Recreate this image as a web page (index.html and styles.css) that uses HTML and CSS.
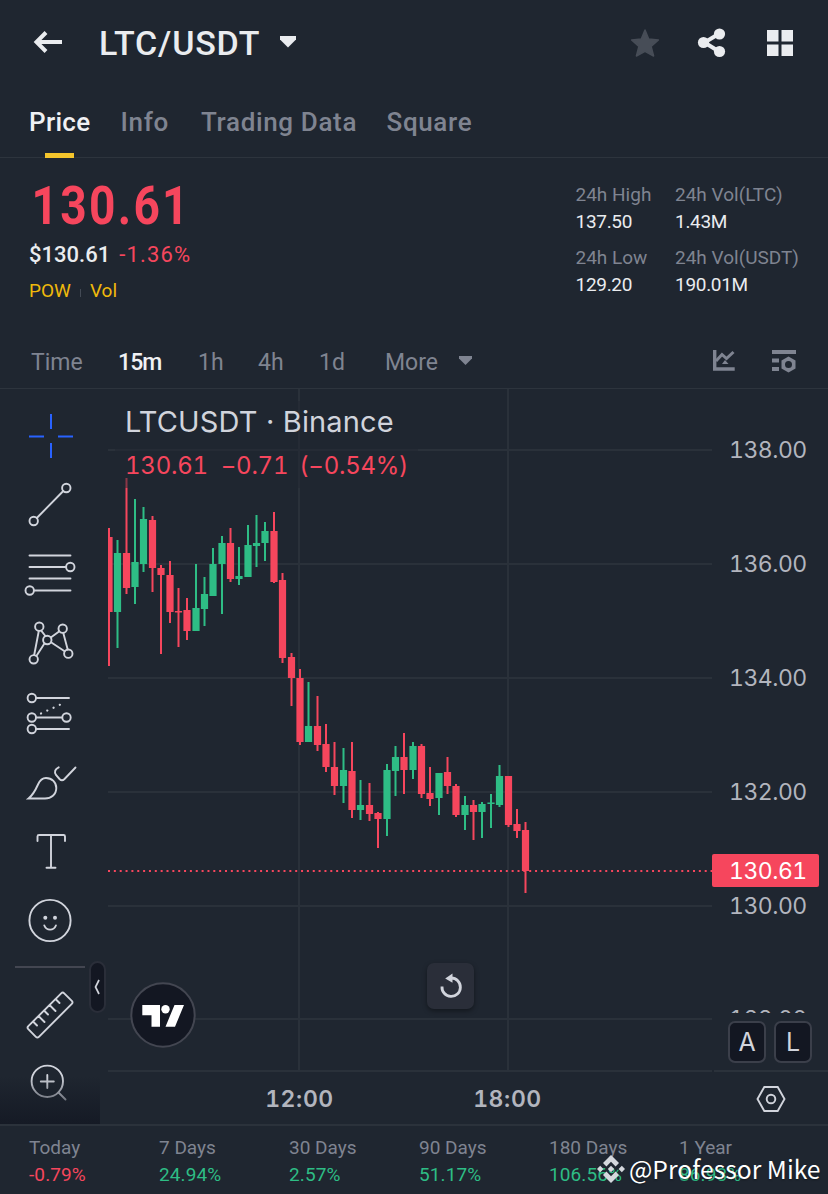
FILE: index.html
```html
<!DOCTYPE html>
<html lang="en">
<head>
<meta charset="utf-8">
<title>LTC/USDT</title>
<link rel="stylesheet" href="styles.css">
</head>
<body>
<div class="app">
  <header class="header">
    <svg class="back" width="30" height="26" viewBox="0 0 30 26"><path d="M29 13H4M13 3.500L3.500 13l9.500 9.500"/></svg>
    <h1 class="pair">LTC/USDT</h1>
    <svg class="caret" width="16" height="12" viewBox="0 0 16 12"><path d="M0 0H16V3.600L8 11.400 0 3.600Z"/></svg>
    <div class="header-actions">
      <svg width="30" height="30" viewBox="0 0 30 30"><path class="star" d="M15 2l3.700 9 9.700 1-7.300 6.400 2.500 9.600L15 23.300 6.400 28l2.500-9.600L1.600 12l9.700-1z"/></svg>
      <svg width="30" height="30" viewBox="0 0 30 30"><path class="share-line" d="M22 5.700L7.500 14.500 22 23.500"/><circle class="fill-light" cx="22.500" cy="6" r="5.600"/><circle class="fill-light" cx="6.500" cy="14.500" r="5.600"/><circle class="fill-light" cx="22.500" cy="23.500" r="5.600"/></svg>
      <svg width="26" height="26" viewBox="0 0 26 26"><path class="fill-light" d="M0 0h11.500v11.500H0zM14.500 0H26v11.500H14.500zM0 14.500h11.500V26H0zM14.500 14.500H26V26H14.500z"/></svg>
    </div>
  </header>

  <nav class="tabs">
    <span class="tab active">Price</span>
    <span class="tab">Info</span>
    <span class="tab">Trading Data</span>
    <span class="tab">Square</span>
  </nav>

  <section class="summary">
    <div class="quote">
      <div class="last">130.61</div>
      <div class="fiat"><span>$130.61</span><span class="change">-1.36%</span></div>
      <div class="tags"><span>POW</span><i></i><span>Vol</span></div>
    </div>
    <dl class="stats">
      <div><dt>24h High</dt><dd>137.50</dd></div>
      <div><dt>24h Vol(LTC)</dt><dd>1.43M</dd></div>
      <div><dt>24h Low</dt><dd>129.20</dd></div>
      <div><dt>24h Vol(USDT)</dt><dd>190.01M</dd></div>
    </dl>
  </section>

  <nav class="intervals">
    <span>Time</span><span class="active">15m</span><span>1h</span><span>4h</span><span>1d</span><span>More</span>
    <svg class="more-caret" width="13" height="9" viewBox="0 0 13 9"><path d="M0 0h13v2.500L6.500 9 0 2.500z"/></svg>
    <svg class="line-icon" width="22" height="22" viewBox="0 0 22 22"><path d="M1.700 0v19h20" stroke-width="3.400"/><path d="M3 11l6-6.500 4.500 4L20.500 2" stroke-width="3"/><path class="solid" d="M9 14l3-4 3.500 4z"/></svg>
    <svg class="list-icon" width="24" height="23" viewBox="0 0 24 23"><path class="solid" fill-rule="evenodd" d="M0 0h24v4H0zM0 8.500h7v4H0zM0 17h7v4H0zM16.500 6.500l7 4v8l-7 4-7-4v-8zM16.500 11a3.500 3.500 0 100 7 3.500 3.500 0 000-7z"/></svg>
  </nav>

  <main class="chart">
    <aside class="toolbar">
      <svg class="tool cross" viewBox="0 0 100 69"><path d="M29 34.500h15M58 34.500h15M51 12v15M51 41v15"/></svg>
      <svg class="tool" viewBox="0 0 100 69"><path d="M36.800 47L63.300 20"/><circle cx="66.300" cy="17" r="4.200"/><circle cx="33.700" cy="50" r="4.200"/></svg>
      <svg class="tool" viewBox="0 0 100 69"><path d="M29.500 15.500h41M29.500 27h36.500M29.500 38.500h41M34 50.500h36.500"/><circle cx="70.300" cy="27" r="4.200"/><circle cx="29.700" cy="50.500" r="4.200"/></svg>
      <svg class="tool" viewBox="0 0 100 69"><path d="M38.800 22L34.200 46M41.200 21.700l4.200 5.300M50.800 28.500l8.600-6.300M63.300 24l4.400 16.500M51 33.300l13.600 9M44.600 34.300l-8.200 12.600"/><circle cx="39.300" cy="17.700" r="4.200"/><circle cx="62.700" cy="19.700" r="4.200"/><circle cx="47.300" cy="31" r="4.200"/><circle cx="33.700" cy="50.300" r="4.200"/><circle cx="68.300" cy="44.700" r="4.200"/></svg>
      <svg class="tool" viewBox="0 0 100 69"><path d="M36 20h33M36 39.500h26M36 51h33"/><path class="dots" d="M41 35.500L66 24"/><circle cx="31.800" cy="20" r="4.200"/><circle cx="31.800" cy="39.500" r="4.200"/><circle cx="66.500" cy="39.500" r="4.200"/><circle cx="31.800" cy="51" r="4.200"/></svg>
      <svg class="tool" viewBox="0 0 100 69"><path d="M28.500 51.500C33 48 36 42 38 37.500C40 33 42.500 31 46 31C52 31 56.300 35.500 56.300 41C56.300 47.500 51 51.500 45 51.500ZM58.700 20.300C55 22 54 25 56 28L59.500 32Q62 34.500 64.500 32L75.500 20.500"/></svg>
      <svg class="tool" viewBox="0 0 100 69"><path d="M37.500 25V20.500Q37.500 19 39 19H63.500Q65 19 65 20.500V25M51 19V51.700M46.500 51.700H55.500"/></svg>
      <svg class="tool" viewBox="0 0 100 69"><circle cx="50" cy="35.500" r="20.600"/><path d="M44.300 40.500C46.500 46 53.700 46 55.900 40.500"/><circle class="eye" cx="45.300" cy="32.700" r="2"/><circle class="eye" cx="55" cy="32.700" r="2"/></svg>
      <hr class="tool-divider">
      <svg class="tool" viewBox="0 0 100 69"><path d="M61.200 13.300Q62.700 11.800 64.200 13.300L71.800 20.900Q73.300 22.400 71.800 23.900L38.900 56.800Q37.400 58.300 35.900 56.800L28.300 49.200Q26.800 47.700 28.300 46.200ZM33 41.500l4 4M38.500 36l6 6M44 30.500l4 4M49.500 25l6 6M55.500 19l4 4"/></svg>
      <svg class="tool" viewBox="0 0 100 69"><circle cx="47.300" cy="32.300" r="15.700"/><path d="M47.300 26v13M40.800 32.500h13M58.500 43.500l7 7"/></svg>
      <div class="toolbar-fade"></div>
      <button class="collapse"><svg width="6" height="16" viewBox="0 0 6 16"><path d="M5 1L1.500 8 5 15"/></svg></button>
    </aside>

    <div class="plot">
      <svg id="candles" width="604" height="683" viewBox="108 389 604 683"></svg>
      <div class="legend">
        <div class="legend-title">LTCUSDT · Binance</div>
        <div class="legend-values"><span>130.61</span><span>−0.71</span><span class="pct">(−0.54%)</span></div>
      </div>
      <svg class="tv-logo" width="66" height="66" viewBox="130 982 66 66"><circle cx="163" cy="1015" r="31.700"/><path d="M142.300 1005H160V1026.700H151.500V1015.300H142.300ZM174.500 1005H184L175 1026.700H165.500Z"/><circle class="dot" cx="165.500" cy="1009.300" r="4.200"/></svg>
      <button class="reset"><svg width="24" height="26" viewBox="0 0 24 26"><path d="M3 13.500A9.200 9.200 0 1 0 12.200 5"/><path class="head" d="M6.200 5.500L13.500 0.500V9.800Z"/></svg></button>
    </div>

    <div class="price-axis">
      <div class="price-labels">
        <span>138.00</span><span>136.00</span><span>134.00</span><span>132.00</span><span>130.00</span><span>128.00</span>
      </div>
      <div class="price-tag">130.61</div>
      <div class="scale-buttons"><button>A</button><button>L</button></div>
    </div>

    <div class="time-axis"><span>12:00</span><span>18:00</span></div>
    <div class="axis-settings"><svg width="30" height="28" viewBox="0 0 30 28"><path d="M1.500 14L8.300 2h13.400l6.800 12-6.800 12H8.300z"/><circle cx="15" cy="14" r="4.300"/></svg></div>
  </main>

  <footer class="periods">
    <div><span>Today</span><b class="down">-0.79%</b></div>
    <div><span>7 Days</span><b>24.94%</b></div>
    <div><span>30 Days</span><b>2.57%</b></div>
    <div><span>90 Days</span><b>51.17%</b></div>
    <div><span>180 Days</span><b>106.56%</b></div>
    <div><span>1 Year</span><b>86.93%</b></div>
    <div class="watermark">
      <svg width="28" height="28" viewBox="0 0 28 28"><path d="M14 0l8 8-3.400 3.400L14 6.800l-4.600 4.600L6 8zM14 28l8-8-3.400-3.400L14 21.200l-4.600-4.600L6 20zM14 10.800l3.200 3.200-3.200 3.200-3.200-3.200zM3.200 10.800L6.400 14l-3.200 3.200L0 14zM24.800 10.800L28 14l-3.200 3.200-3.200-3.200z"/></svg>
      <span>@Professor Mike</span>
    </div>
  </footer>
</div>
<script src="chart.js"></script>
</body>
</html>
```

FILE: styles.css
```css
* { box-sizing: border-box; }
body { margin: 0; background: #1f2630; color: #eaecef; font-family: Roboto, "Liberation Sans", sans-serif; }
button { margin: 0; padding: 0; font: inherit; color: inherit; }
svg { display: block; flex: none; }
.app { width: 828px; height: 1194px; overflow: hidden; }

.header { height: 86px; display: flex; align-items: center; padding: 0 35px 0 33px; }
.back { fill: none; stroke: #eaecef; stroke-width: 4; margin-top: -3px; }
.pair { margin: 0 0 0 36px; width: 160px; white-space: nowrap; font-size: 34px; font-weight: 500; letter-spacing: 0.800px; line-height: 87px; }
.caret { fill: #eaecef; margin-left: 21px; margin-top: -3px; }
.header-actions { margin-left: auto; display: flex; align-items: center; margin-top: -1px; }
.header-actions svg:nth-child(2) { margin-left: 37px; }
.header-actions svg:nth-child(3) { margin-left: 40px; }
.star { fill: #474d57; stroke: #474d57; stroke-width: 1.500; stroke-linejoin: round; }
.share-line { fill: none; stroke: #eaecef; stroke-width: 4; }
.fill-light { fill: #eaecef; }

.tabs { height: 72px; border-bottom: 1px solid #2d343d; padding-left: 29px; display: grid; grid-template-columns: 91.500px 80.500px 185.500px 1fr; font-size: 26px; font-weight: 500; letter-spacing: 0.650px; line-height: 73px; color: #7f8491; white-space: nowrap; }
.tab.active { color: #f0f1f4; position: relative; letter-spacing: 0.300px; }
.tab.active::after { content: ""; position: absolute; left: 16px; bottom: 1px; width: 29px; height: 5px; background: #f5c52c; }

.summary { height: 178px; display: flex; justify-content: space-between; padding: 18px 18px 0 29px; }
.last { width: 180px; font-size: 53px; font-weight: 700; line-height: 60px; color: #f6465d; letter-spacing: 2.600px; transform: scaleX(0.87); transform-origin: 0 0; padding-left: 3px; }
.fiat { display: flex; gap: 9px; font-size: 22px; font-weight: 500; line-height: 37px; }
.change { color: #f6465d; font-weight: 400; letter-spacing: 1.200px; }
.tags { display: flex; align-items: center; font-size: 19px; line-height: 36px; color: #f0b90b; }
.tags i { width: 1px; height: 8px; background: #434a55; margin: 4px 9px 0 9px; }
.stats { margin: 5px 0 0; display: grid; grid-template-columns: 99.500px 135px; grid-template-rows: 54px 54px; row-gap: 9px; font-size: 19px; line-height: 27px; white-space: nowrap; }
.stats dt { color: #7f8491; }
.stats dd { margin: 0; color: #eaecef; letter-spacing: -0.300px; }

.intervals { height: 53px; border-bottom: 1px solid #2d343d; padding-left: 31px; display: grid; grid-template-columns: 87px 80px 60px 61px 66px 74px 254px 59px 1fr; align-items: center; font-size: 23px; color: #7f8491; line-height: 51px; }
.intervals .active { color: #f0f1f4; font-weight: 500; letter-spacing: -0.900px; }
.more-caret, .solid { fill: #7f8491; stroke: none; }
.more-caret { margin-top: -3px; }
.line-icon { fill: none; stroke: #7f8491; margin-top: -3px; }
.list-icon { margin-top: -2px; }

.chart { height: 735px; display: grid; grid-template-columns: 108px 604px 116px; grid-template-rows: 683px 52px; }
.toolbar { grid-row: 1 / 3; width: 100px; padding-top: 13px; position: relative; }
.tool { width: 100px; height: 69px; fill: none; stroke: #d1d4dc; stroke-width: 1.900; stroke-linecap: round; }
.cross { stroke: #2962ff; stroke-width: 2; stroke-linecap: butt; }
.dots { stroke-width: 2.200; stroke-dasharray: 0.100 6.800; }
.eye { fill: #d1d4dc; stroke: none; }
.tool-divider { margin: 12px 15px; border: 0; height: 2px; background: #434651; }
.toolbar-fade { position: absolute; left: 0; bottom: 0; width: 100px; height: 48px; background: linear-gradient(rgba(19, 23, 34, 0), #151a25); }
.collapse { position: absolute; left: 89px; top: 572px; width: 17px; height: 52px; border: 2px solid #2a2e39; border-radius: 9px; background: #131722; display: grid; place-items: center; }
.collapse svg { margin-left: -1px; }
.collapse path { fill: none; stroke: #d1d4dc; stroke-width: 1.700; }

.plot { position: relative; }
.grid { stroke: #2a313a; stroke-width: 2; }
.price-line { stroke: #f6465d; stroke-width: 2; stroke-dasharray: 2 3.850; }
.up { fill: #2ebd85; }
.down-candle { fill: #f6465d; }
.legend { position: absolute; left: 7px; top: 12px; padding: 0 10px; background: rgba(31, 38, 48, 0.5); font-family: Inter, sans-serif; white-space: nowrap; }
.legend-title { font-size: 29px; line-height: 42px; letter-spacing: 0.150px; color: #d1d4dc; }
.legend-values { display: flex; gap: 13px; font-size: 24px; font-variant-numeric: tabular-nums; letter-spacing: -0.250px; line-height: 45px; color: #f6465d; }
.legend-values .pct { margin-left: -2px; }
.tv-logo { position: absolute; left: 22px; top: 593px; fill: #fff; }
.tv-logo circle { fill: #131722; stroke: #434651; stroke-width: 2; }
.tv-logo .dot { fill: #fff; stroke: none; }
.reset { position: absolute; left: 319px; top: 574px; width: 47px; height: 46px; border: 0; border-radius: 7px; background: #2a2e39; box-shadow: 0 2px 5px rgba(0, 0, 0, 0.4); display: grid; place-items: center; }
.reset path { fill: none; stroke: #d1d4dc; stroke-width: 2.800; }
.reset .head { fill: #d1d4dc; stroke: none; }

.price-axis { position: relative; border-bottom: 2px solid #2b323b; margin-left: 2px; font-family: Inter, sans-serif; font-size: 23px; font-variant-numeric: tabular-nums; letter-spacing: -0.500px; color: #b2b5be; }
.price-labels { height: 624px; overflow: hidden; padding: 4px 0 0 15px; display: grid; grid-auto-rows: 113.900px; line-height: 114px; }
.price-tag { position: absolute; left: -2px; top: 465px; width: 107px; height: 33px; padding-left: 17px; line-height: 34px; border-radius: 2px; background: #f6465d; color: #fff; }
.scale-buttons { display: flex; gap: 8px; margin: 8px 0 0 14px; }
.scale-buttons button { width: 38px; height: 42px; border: 2px solid #3b3f4a; border-radius: 7px; background: #131722; color: #d1d4dc; font-size: 25px; letter-spacing: 0; }
.time-axis { position: relative; font-family: Inter, sans-serif; font-weight: 600; font-size: 23px; font-variant-numeric: tabular-nums; letter-spacing: 0.600px; color: #b2b5be; display: grid; grid-template-columns: 208px 208px; padding-left: 87.500px; text-align: center; line-height: 55px; }
.axis-settings { padding: 13px 0 0 44px; }
.axis-settings svg { fill: none; stroke: #d1d4dc; stroke-width: 1.900; }

.periods { position: relative; height: 70px; border-top: 2px solid #2b323b; padding: 8px 0 0 29px; display: grid; grid-template-columns: repeat(6, 130px); font-size: 19px; line-height: 27px; color: #7f8491; white-space: nowrap; }
.periods div > b { display: block; font-weight: 400; letter-spacing: 0.100px; color: #2ebd85; }
.periods .down { color: #f6465d; }
.watermark { position: absolute; left: 597px; top: 27px; display: flex; align-items: center; gap: 4px; line-height: 32px; font-family: "Noto Sans CJK SC", sans-serif; font-size: 24.700px; color: #fff; text-shadow: 0 1px 2px rgba(0, 0, 0, 0.4); }
.watermark svg { fill: #d5d8dd; }
.watermark span { margin-top: -1px; }
```

FILE: chart.js
```js
// Candles as [high, body top, body bottom, low, rising] in plot pixels.
const candles = [
  [528,537,612,666,0],[540,553,612,648,1],[478,553,588,594,0],[499,562,587,604,1],[507,519,564,572,1],
  [516,520,568,592,0],[565,568,575,654,0],[561,575,612,623,0],[588,611,612.5,647,0],[598,610,631,640,0],
  [564,608,631,631,1],[577,594,609,626,1],[548,564,596,596,1],[536,543,564,614,1],[528,543,579,582,0],
  [547,576,579,585,1],[525,545,577,577,1],[515,543,546,567,1],[522,531,543,561,1],[512,531,582,583,0],
  [573,580,658,663,0],[653,657,678,706,0],[669,678,742,745,0],[682,726,742,742,1],[696,726,745,751,0],
  [724,744,767,772,0],[742,767,786,795,0],[748,770,786,803,1],[742,771,810,818,0],[780,805,810,820,1],
  [783,805,814,821,0],[812,813,819,848,0],[764,770,819,836,1],[746,757,771,796,1],[733,757,770,794,0],
  [742,746,770,779,1],[744,746,794,798,0],[767,793,799,806,0],[773,773,798,815,1],[757,772,786,794,0],
  [784,786,815,817,0],[796,805,815,830,1],[800,805,812,840,0],[802,804,812,838,1],[794,802.5,804,828,1],
  [765,776,805,807,1],[776,776,825,827,0],[809,824,831,838,0],[822,830,871,893,0]
];
let out = '<g class="grid">';
for (const y of [450, 564, 678, 792, 906, 1019]) out += `<path d="M108 ${y}H712"/>`;
for (const x of [299, 508]) out += `<path d="M${x} 389V1071"/>`;
out += '<path d="M108 1071H712"/></g><path class="price-line" d="M108 871H712"/>';
candles.forEach(([high, top, bottom, low, rising], i) => {
  const x = Math.round((109 + i * 8.68) * 2) / 2;
  const cls = rising ? 'up' : 'down-candle';
  out += `<rect class="${cls}" x="${x - 1}" y="${high}" width="2" height="${low - high}"/>`;
  out += `<rect class="${cls}" x="${x - 3.6}" y="${top}" width="7.2" height="${bottom - top}"/>`;
});
document.getElementById('candles').innerHTML = out;
```
